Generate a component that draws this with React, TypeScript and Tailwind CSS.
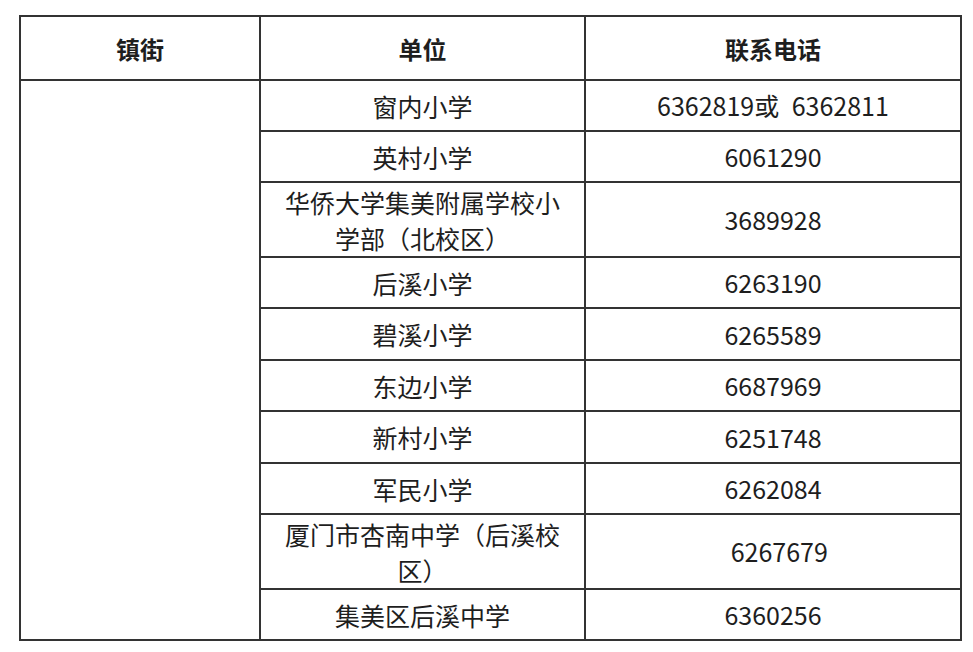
const rows: { name: string; phone: string; h: string }[] = [
  { name: "窗内小学", phone: "6362819或\u20026362811", h: "h-[51px]" },
  { name: "英村小学", phone: "6061290", h: "h-[51px]" },
  { name: "华侨大学集美附属学校小学部（北校区）", phone: "3689928", h: "h-[75px]" },
  { name: "后溪小学", phone: "6263190", h: "h-[51px]" },
  { name: "碧溪小学", phone: "6265589", h: "h-[52px]" },
  { name: "东边小学", phone: "6687969", h: "h-[51px]" },
  { name: "新村小学", phone: "6251748", h: "h-[52px]" },
  { name: "军民小学", phone: "6262084", h: "h-[51px]" },
  { name: "厦门市杏南中学（后溪校区）", phone: "\u20026267679", h: "h-[75px]" },
  { name: "集美区后溪中学", phone: "6360256", h: "h-[51px]" },
];

export default function App() {
  return (
    <div
      className="w-[973px] h-[652px] bg-white text-[#1e1e1e] pt-[15px] pl-[19px]"
      style={{ fontFamily: '"Noto Sans CJK SC", "Noto Sans", sans-serif' }}
    >
      <table className="table-fixed border-collapse w-[941px] text-[25px] leading-[35px] text-center">
        <colgroup>
          <col className="w-[240px]" />
          <col className="w-[325px]" />
          <col className="w-[376px]" />
        </colgroup>
        <thead>
          <tr className="h-[64px]">
            <th className="border-2 border-[#333] font-bold text-[24px]">镇街</th>
            <th className="border-2 border-[#333] font-bold text-[24px]">单位</th>
            <th className="border-2 border-[#333] font-bold text-[24px]">联系电话</th>
          </tr>
        </thead>
        <tbody>
          {rows.map((r, i) => (
            <tr key={r.name} className={r.h}>
              {i === 0 && <td rowSpan={rows.length} className="border-2 border-[#333]" />}
              <td className="border-2 border-[#333] px-[20px] py-0 font-normal leading-[36px]">{r.name}</td>
              <td className="border-2 border-[#333] whitespace-pre">{r.phone}</td>
            </tr>
          ))}
        </tbody>
      </table>
    </div>
  );
}
